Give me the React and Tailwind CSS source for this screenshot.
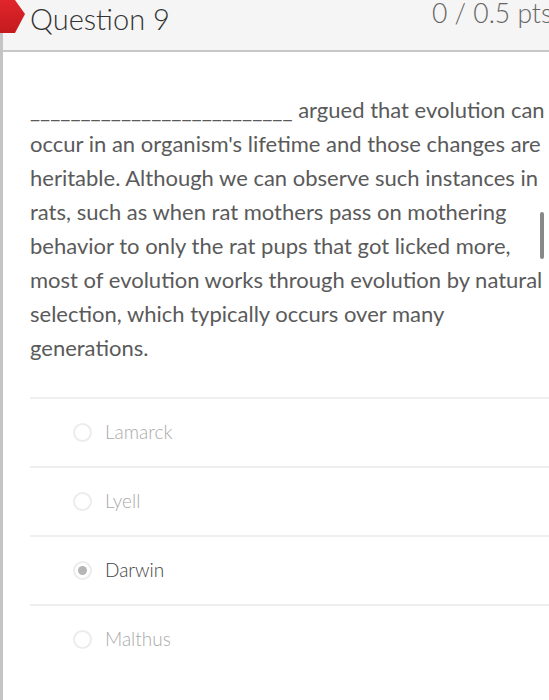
import React from 'react';

const answers = [
  { label: 'Lamarck', selected: false },
  { label: 'Lyell', selected: false },
  { label: 'Darwin', selected: true },
  { label: 'Malthus', selected: false },
];

function Radio({ selected }) {
  return (
    <span className="w-[19px] h-[19px] rounded-full border-2 border-[#ececec] bg-white flex items-center justify-center shrink-0">
      {selected && <span className="w-[9px] h-[9px] rounded-full bg-[#b5b5b5]" />}
    </span>
  );
}

export default function App() {
  return (
    <div className="w-[549px] h-[700px] overflow-hidden bg-white font-['Lato','Noto_Sans',sans-serif] relative">
      <div className="h-full border-l-[3px] border-[#c4c4c4] flex flex-col">
        <header className="relative h-[52px] bg-[#f5f5f5] border-b-2 border-[#c7c7c7] flex items-start pl-[27px] shrink-0">
          <svg className="absolute -left-[3px] top-0" width="26" height="33" viewBox="0 0 26 33">
            <defs>
              <linearGradient id="flag" x1="0" y1="0" x2="0" y2="1">
                <stop offset="0" stopColor="#e0262b" />
                <stop offset="1" stopColor="#c41a1f" />
              </linearGradient>
            </defs>
            <polygon points="0,0 15,0 25,14 15,33 0,33" fill="url(#flag)" />
          </svg>
          <h1 className="text-[29px] font-light text-[#333] leading-none pt-[4px] whitespace-nowrap">Question 9</h1>
          <span className="ml-auto shrink-0 w-[117px] text-[26.5px] font-light text-[#666] leading-none whitespace-nowrap">0 / 0.5 pts</span>
        </header>

        <div className="pl-[27px] pt-[41px]">
          <p className="text-[22px] leading-[34px] text-[#5a5a5a] w-[519px]">
            __________________________ argued that evolution can occur in an organism's lifetime and those changes are heritable. Although we can observe such instances in rats, such as when rat mothers pass on mothering behavior to only the rat pups that got licked more, most of evolution works through evolution by natural selection, which typically occurs over many generations.
          </p>

          <div className="mt-[32px]">
            {answers.map((a) => (
              <div key={a.label} className="border-t-2 border-[#efefef] h-[69px] flex items-center gap-[13px] pl-[43px]">
                <Radio selected={a.selected} />
                <span className={`text-[19px] font-light ${a.selected ? 'text-[#444]' : 'text-[#aaa]'}`}>{a.label}</span>
              </div>
            ))}
          </div>
        </div>
      </div>

      <div className="absolute left-[540px] top-[212px] w-[4px] h-[47px] rounded-full bg-[#888]" />
    </div>
  );
}
